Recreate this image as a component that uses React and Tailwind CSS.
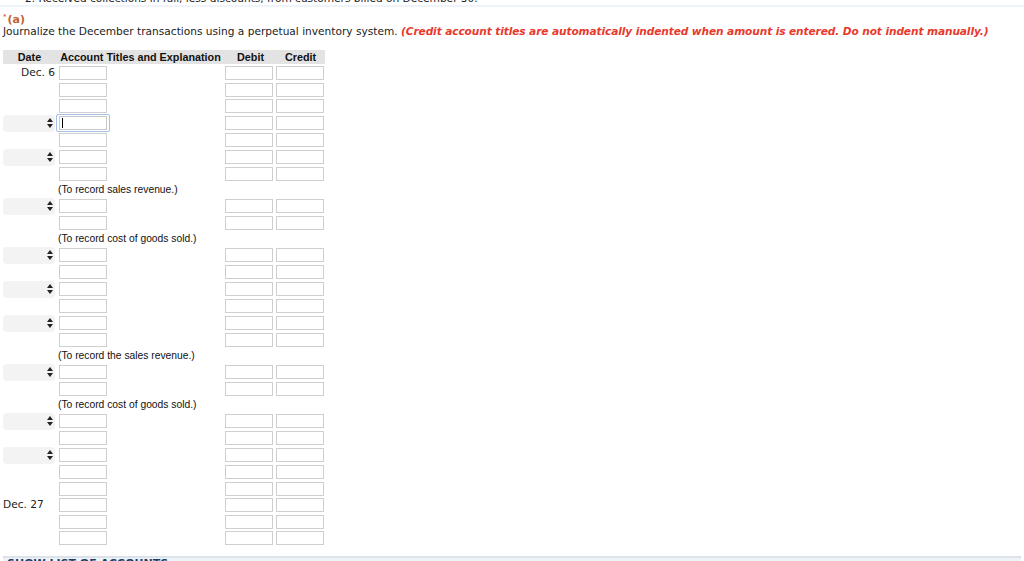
import React from 'react';

const rows = [
  { t: 'n', date: 'Dec. 6' },
  { t: 'n' },
  { t: 'n' },
  { t: 's', focus: true },
  { t: 'n' },
  { t: 's' },
  { t: 'n' },
  { t: 't', text: '(To record sales revenue.)' },
  { t: 's' },
  { t: 'n' },
  { t: 't', text: '(To record cost of goods sold.)' },
  { t: 's' },
  { t: 'n' },
  { t: 's' },
  { t: 'n' },
  { t: 's' },
  { t: 'n' },
  { t: 't', text: '(To record the sales revenue.)' },
  { t: 's' },
  { t: 'n' },
  { t: 't', text: '(To record cost of goods sold.)' },
  { t: 's' },
  { t: 'n' },
  { t: 's' },
  { t: 'n' },
  { t: 'n' },
  { t: 'n', date27: 'Dec. 27' },
  { t: 'n' },
  { t: 'n' },
];

function Box({ focus }) {
  if (focus) {
    return (
      <div className="w-[54px] h-[18px] border border-[#a6c0e8] rounded-[2px] flex items-center justify-center -mx-[3px]">
        <div className="w-[48px] h-[14px] border border-[#c9c9c9] bg-white flex items-center pl-[2px]">
          <div className="w-[1px] h-[10px] bg-black" />
        </div>
      </div>
    );
  }
  return <div className="w-[48px] h-[14px] border border-[#cfcfcf] bg-white" />;
}

function Arrows() {
  return (
    <svg width="6" height="10" viewBox="0 0 6 10" className="mr-[2px]">
      <path d="M3 0 L6 4 L0 4 Z" fill="#222" />
      <path d="M3 10 L6 6 L0 6 Z" fill="#222" />
    </svg>
  );
}

function Row({ r }) {
  if (r.t === 't') {
    return (
      <div className="flex h-[15px] items-center">
        <div className="w-[55px]" />
        <div
          className="text-[10.3px] text-[#111] leading-none whitespace-nowrap"
          style={{ fontFamily: '"Liberation Sans", Arial, sans-serif' }}
        >
          {r.text}
        </div>
      </div>
    );
  }
  const h = r.t === 's' ? 'h-[17.5px]' : 'h-[16.5px]';
  return (
    <div className={`flex items-center ${h}`}>
      <div className="w-[56px] flex items-center h-full">
        {r.t === 's' && (
          <div className="w-[52px] h-[17px] bg-[#f3f3f3] rounded-[4px] flex items-center justify-end">
            <Arrows />
          </div>
        )}
        {r.date && <div className="w-[52px] text-right text-[10.6px] text-[#222]">{r.date}</div>}
        {r.date27 && <div className="text-[10.6px] text-[#222]">{r.date27}</div>}
      </div>
      <div className="w-[166px] flex">
        <Box focus={r.focus} />
      </div>
      <div className="w-[51px]">
        <Box />
      </div>
      <div className="w-[49px]">
        <Box />
      </div>
    </div>
  );
}

export default function App() {
  return (
    <div className="w-[1024px] h-[561px] overflow-hidden bg-white text-[#222]" style={{ fontFamily: '"DejaVu Sans", Verdana, sans-serif' }}>
      {/* cut-off question line */}
      <div className="h-[5px] overflow-hidden relative">
        <div className="absolute left-[25px] top-[-9px] text-[10.6px] text-[#222] whitespace-nowrap">
          2. Received collections in full, less discounts, from customers billed on December 30.
        </div>
      </div>
      <div className="h-[2px] bg-[#eef4fa]" />

      <div className="pl-[3px] pt-[6px]">
        <div className="flex items-start h-[14px]">
          <span className="text-[#e2332a] text-[7px] leading-none mt-[1px]">*</span>
          <span className="text-[#c4622d] font-bold text-[11px] leading-[14px] ml-[1px]">(a)</span>
        </div>
        <div className="text-[10.6px] leading-[14px] -mt-[3px] whitespace-nowrap">
          Journalize the December transactions using a perpetual inventory system.{' '}
          <span className="text-[#e8392c] font-bold italic tracking-[-0.1px]">
            (Credit account titles are automatically indented when amount is entered. Do not indent manually.)
          </span>
        </div>

        {/* header */}
        <div
          className="mt-[12px] w-[322px] h-[14px] bg-[#e3e3e3] flex items-center text-[10.8px] font-bold text-[#111] whitespace-nowrap"
          style={{ fontFamily: '"Liberation Sans", Arial, sans-serif' }}
        >
          <div className="w-[53px] text-center">Date</div>
          <div className="w-[169px] text-center">Account Titles and Explanation</div>
          <div className="w-[51px] text-center">Debit</div>
          <div className="w-[49px] text-center">Credit</div>
        </div>

        <div className="mt-[1px]">
          {rows.map((r, i) => (
            <Row key={i} r={r} />
          ))}
        </div>
      </div>

      {/* bottom bar */}
      <div className="mt-[9px] mx-[3px] border-t-2 border-[#dde3ea] bg-[#eef3f8] h-[14px] overflow-hidden">
        <div className="pl-[4px] pt-0 text-[11px] font-bold text-[#1d3d6b] leading-[12px] whitespace-nowrap">SHOW LIST OF ACCOUNTS</div>
      </div>
    </div>
  );
}
